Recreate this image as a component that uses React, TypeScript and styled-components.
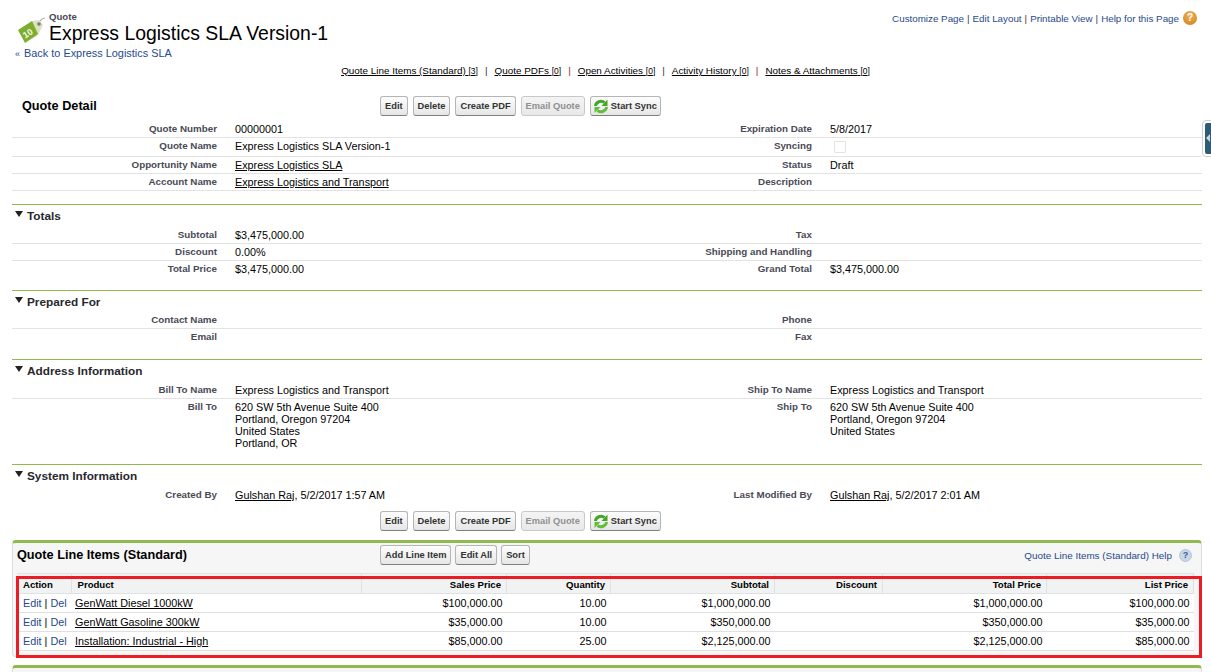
import React from "react";
import styled, { createGlobalStyle } from "styled-components";

const GlobalStyle = createGlobalStyle`
  html, body {
    margin: 0;
    padding: 0;
    height: 672px;
    overflow: hidden;
    background: #fff;
  }
  body {
    font-family: "Liberation Sans", Arial, sans-serif;
    font-size: 11px;
    color: #000;
  }
`;

type Field = { label: string; value?: React.ReactNode; lines?: string[]; link?: boolean };
type Row = [Field, Field];

const detailRows: Row[] = [
  [{ label: "Quote Number", value: "00000001" }, { label: "Expiration Date", value: "5/8/2017" }],
  [{ label: "Quote Name", value: "Express Logistics SLA Version-1" }, { label: "Syncing", value: <Check /> }],
  [{ label: "Opportunity Name", value: "Express Logistics SLA", link: true }, { label: "Status", value: "Draft" }],
  [{ label: "Account Name", value: "Express Logistics and Transport", link: true }, { label: "Description" }],
];

const totalRows: Row[] = [
  [{ label: "Subtotal", value: "$3,475,000.00" }, { label: "Tax" }],
  [{ label: "Discount", value: "0.00%" }, { label: "Shipping and Handling" }],
  [{ label: "Total Price", value: "$3,475,000.00" }, { label: "Grand Total", value: "$3,475,000.00" }],
];

const preparedRows: Row[] = [
  [{ label: "Contact Name" }, { label: "Phone" }],
  [{ label: "Email" }, { label: "Fax" }],
];

const addressRows: Row[] = [
  [
    { label: "Bill To Name", value: "Express Logistics and Transport" },
    { label: "Ship To Name", value: "Express Logistics and Transport" },
  ],
  [
    {
      label: "Bill To",
      lines: ["620 SW 5th Avenue Suite 400", "Portland, Oregon 97204", "United States", "Portland, OR"],
    },
    {
      label: "Ship To",
      lines: ["620 SW 5th Avenue Suite 400", "Portland, Oregon 97204", "United States"],
    },
  ],
];

const columns = [
  { title: "Sales Price", width: 145 },
  { title: "Quantity", width: 104 },
  { title: "Subtotal", width: 164 },
  { title: "Discount", width: 108 },
  { title: "Total Price", width: 164 },
  { title: "List Price", width: 147 },
];

const lineItems = [
  { name: "GenWatt Diesel 1000kW", cells: ["$100,000.00", "10.00", "$1,000,000.00", "", "$1,000,000.00", "$100,000.00"] },
  { name: "GenWatt Gasoline 300kW", cells: ["$35,000.00", "10.00", "$350,000.00", "", "$350,000.00", "$35,000.00"] },
  { name: "Installation: Industrial - High", cells: ["$85,000.00", "25.00", "$2,125,000.00", "", "$2,125,000.00", "$85,000.00"] },
];

const relatedLinks = [
  { label: "Quote Line Items (Standard)", count: 3 },
  { label: "Quote PDFs", count: 0 },
  { label: "Open Activities", count: 0 },
  { label: "Activity History", count: 0 },
  { label: "Notes & Attachments", count: 0 },
];

function Check() {
  return <CheckBox />;
}

function TagIcon() {
  return (
    <svg width="32" height="30" viewBox="0 0 32 30">
      <path d="M24 8c1-3 4-5 6-5" fill="none" stroke="#a5a5a5" strokeWidth="1.2" />
      <path d="M17 6l7-1 4 5-3 6-3 5-12 7z" fill="#dbe2bd" />
      <path d="M3 15 17 6l6 13-13 9z" fill="#7dae2f" />
      <circle cx="24" cy="9" r="1.8" fill="#7a7a7a" />
      <text
        x="8"
        y="22"
        fontSize="9"
        fontWeight="700"
        fill="#f4f7e6"
        fontFamily="Liberation Sans"
        transform="rotate(-34 12 19)"
      >
        10
      </text>
    </svg>
  );
}

function SyncIcon() {
  return (
    <svg width="16" height="16" viewBox="0 0 16 16">
      <path d="M2.500 8A5.500 5 0 0 1 11.500 4.500" fill="none" stroke="#45a526" strokeWidth="3" />
      <path d="M14.500 1.500V8H8.500z" fill="#45a526" />
      <path d="M13.500 9A5.500 5 0 0 1 4.500 12.500" fill="none" stroke="#62bd3f" strokeWidth="3" />
      <path d="M1.500 15V9H7.500z" fill="#62bd3f" />
    </svg>
  );
}

function ToolbarButtons() {
  return (
    <ButtonRow>
      <Button>Edit</Button>
      <Button>Delete</Button>
      <Button>Create PDF</Button>
      <Button disabled>Email Quote</Button>
      <SyncButton>
        <SyncIcon />
        Start Sync
      </SyncButton>
    </ButtonRow>
  );
}

function FieldCells({ field }: { field: Field }) {
  return (
    <>
      <Label>{field.label}</Label>
      <Value>
        {field.lines ? (
          field.lines.map((l) => <AddressLine key={l}>{l}</AddressLine>)
        ) : field.link ? (
          <UnderLink>{field.value}</UnderLink>
        ) : (
          field.value
        )}
      </Value>
    </>
  );
}

function Rows({ rows }: { rows: Row[] }) {
  return (
    <>
      {rows.map((r) => (
        <FieldRow key={r[0].label}>
          <FieldCells field={r[0]} />
          <FieldCells field={r[1]} />
        </FieldRow>
      ))}
    </>
  );
}

export default function App() {
  return (
    <Page>
      <GlobalStyle />
      <SideTab />
      <Header>
        <TitleBlock>
          <TagWrap>
            <TagIcon />
          </TagWrap>
          <div>
            <ObjectType>Quote</ObjectType>
            <PageTitle>Express Logistics SLA Version-1</PageTitle>
          </div>
        </TitleBlock>
        <TopLinks>
          <BlueLink>Customize Page</BlueLink>
          <Pipe>|</Pipe>
          <BlueLink>Edit Layout</BlueLink>
          <Pipe $red>|</Pipe>
          <BlueLink>Printable View</BlueLink>
          <Pipe>|</Pipe>
          <BlueLink>Help for this Page</BlueLink>
          <HelpDot>?</HelpDot>
        </TopLinks>
      </Header>
      <BackLine>
        <small>«</small> <BlueLink>Back to Express Logistics SLA</BlueLink>
      </BackLine>
      <RelatedBar>
        {relatedLinks.map((l, i) => (
          <React.Fragment key={l.label}>
            {i > 0 && <RelatedPipe $red={i === 2 || i === 4}>|</RelatedPipe>}
            <RelatedLink>
              {l.label} <sub>[{l.count}]</sub>
            </RelatedLink>
          </React.Fragment>
        ))}
      </RelatedBar>

      <Detail>
        <DetailHead>
          <DetailTitle>Quote Detail</DetailTitle>
          <ToolbarButtons />
        </DetailHead>
        <Rows rows={detailRows} />

        <Section $top={13}>
          <SectionTitle $height={22}>Totals</SectionTitle>
          <Rows rows={totalRows} />
        </Section>
        <Section $top={13}>
          <SectionTitle>Prepared For</SectionTitle>
          <Rows rows={preparedRows} />
        </Section>
        <Section $top={14}>
          <SectionTitle $height={22}>Address Information</SectionTitle>
          <Rows rows={addressRows} />
        </Section>
        <Section $top={14}>
          <SectionTitle $height={22}>System Information</SectionTitle>
          <FieldRow>
            <Label>Created By</Label>
            <Value>
              <UnderLink>Gulshan Raj</UnderLink>, 5/2/2017 1:57 AM
            </Value>
            <Label>Last Modified By</Label>
            <Value>
              <UnderLink>Gulshan Raj</UnderLink>, 5/2/2017 2:01 AM
            </Value>
          </FieldRow>
        </Section>
        <BottomButtons>
          <ToolbarButtons />
        </BottomButtons>
      </Detail>

      <Panel>
        <PanelHead>
          <PanelTitle>Quote Line Items (Standard)</PanelTitle>
          <PanelButtons>
            <Button>Add Line Item</Button>
            <Button>Edit All</Button>
            <Button>Sort</Button>
          </PanelButtons>
          <PanelHelp>
            <BlueLink>Quote Line Items (Standard) Help</BlueLink>
            <HelpBlue>?</HelpBlue>
          </PanelHelp>
        </PanelHead>
        <Table>
          <thead>
            <tr>
              <Th style={{ width: 54 }}>Action</Th>
              <Th>Product</Th>
              {columns.map((c) => (
                <Th key={c.title} $right style={{ width: c.width }}>
                  {c.title}
                </Th>
              ))}
            </tr>
          </thead>
          <tbody>
            {lineItems.map((item) => (
              <tr key={item.name}>
                <Td>
                  <BlueLink>Edit</BlueLink> | <BlueLink>Del</BlueLink>
                </Td>
                <Td>
                  <UnderLink>{item.name}</UnderLink>
                </Td>
                {item.cells.map((c, i) => (
                  <Td key={i} $right>
                    {c}
                  </Td>
                ))}
              </tr>
            ))}
          </tbody>
        </Table>
        <Highlight />
      </Panel>
      <NextPanel />
    </Page>
  );
}

const Page = styled.div`
  position: relative;
  width: 1211px;
  height: 672px;
  overflow: hidden;
`;

const SideTab = styled.div`
  position: absolute;
  top: 120px;
  left: 1202px;
  width: 14px;
  height: 37px;
  box-sizing: border-box;
  border: 1px solid #cfcfcf;
  border-radius: 4px 0 0 4px;
  background: #fff;
  &::before {
    content: "";
    position: absolute;
    left: 2px;
    right: 0;
    top: 2px;
    bottom: 2px;
    border-radius: 2px 0 0 2px;
    background: #2c5c76;
  }
  &::after {
    content: "";
    position: absolute;
    left: 3px;
    top: 13px;
    border: 4px solid transparent;
    border-right-color: #c9d6dc;
    border-left: 0;
  }
`;

const Header = styled.div`
  display: flex;
  justify-content: space-between;
  box-sizing: border-box;
  height: 47px;
  padding: 12px 14px 0 17px;
`;

const TitleBlock = styled.div`
  display: flex;
`;

const TagWrap = styled.div`
  width: 32px;
  margin-left: -2px;
  margin-right: 2px;
  padding-top: 3px;
`;

const ObjectType = styled.div`
  font-size: 9.6px;
  font-weight: 700;
  color: #4a4a56;
  line-height: 10px;
`;

const PageTitle = styled.h1`
  margin: 0;
  font-size: 19.4px;
  font-weight: 400;
  line-height: 22px;
  white-space: nowrap;
`;

const TopLinks = styled.div`
  display: flex;
  align-items: flex-start;
  font-size: 9.8px;
  line-height: 14px;
`;

const BlueLink = styled.span`
  color: #1f4a8c;
`;

const Pipe = styled.span<{ $red?: boolean }>`
  margin: 0 3px;
  color: ${(p) => (p.$red ? "#7a1f1f" : "#1f3a5c")};
`;

const HelpDot = styled.span`
  width: 14px;
  height: 14px;
  margin: -1px 0 0 4px;
  border-radius: 50%;
  background: radial-gradient(circle at 50% 30%, #f2b158, #d07f18);
  color: #fff;
  font-size: 10px;
  font-weight: 700;
  line-height: 14px;
  text-align: center;
`;

const BackLine = styled.div`
  padding-left: 15px;
  height: 14px;
  font-size: 10.9px;
  line-height: 13px;
  color: #1f4a8c;
  small {
    font-size: 9px;
    margin-right: 1px;
  }
`;

const RelatedBar = styled.div`
  display: flex;
  justify-content: center;
  align-items: baseline;
  box-sizing: border-box;
  height: 20px;
  padding-top: 3px;
  font-size: 9.9px;
  line-height: 14px;
`;

const RelatedLink = styled.span`
  text-decoration: underline;
  sub {
    font-size: 8.5px;
    vertical-align: baseline;
  }
`;

const RelatedPipe = styled.span<{ $red?: boolean }>`
  margin: 0 7px;
  color: ${(p) => (p.$red ? "#8a2a2a" : "#333")};
`;

const Detail = styled.div`
  margin: 0 9px 0 12px;
`;

const DetailHead = styled.div`
  display: flex;
  align-items: center;
  height: 28px;
  padding-left: 10px;
  margin-top: 11px;
  margin-bottom: 1px;
`;

const DetailTitle = styled.h2`
  width: 358px;
  margin: 0;
  font-size: 12.7px;
  font-weight: 700;
`;

const ButtonRow = styled.div`
  display: flex;
  gap: 5px;
`;

const Button = styled.button`
  display: inline-flex;
  align-items: center;
  height: 20px;
  padding: 0 4px;
  border: 1px solid #b5b5b5;
  border-bottom-color: #7f7f7f;
  border-radius: 3px;
  background: linear-gradient(#fdfdfd, #e6e6e6);
  font-family: "Liberation Sans", Arial, sans-serif;
  font-size: 9.3px;
  font-weight: 700;
  color: #333;
  &:disabled {
    color: #909090;
    border-color: #c8c8c8;
    background: linear-gradient(#f4f4f4, #e8e8e8);
  }
`;

const SyncButton = styled(Button)`
  gap: 2px;
  padding: 0 3px 0 2px;
`;

const FieldRow = styled.div`
  display: grid;
  grid-template-columns: 205px 372px 223px 1fr;
  padding: 2px 0 1px;
  line-height: 13px;
  border-bottom: 1px solid #e3e3e3;
  &:last-child {
    border-bottom: 0;
  }
`;

const Label = styled.div`
  min-height: 13px;
  line-height: 11px;
  text-align: right;
  font-size: 9.8px;
  font-weight: 700;
  color: #4a4a56;
`;

const Value = styled.div`
  padding-left: 18px;
  font-size: 10.8px;
  color: #000;
`;

const AddressLine = styled.div`
  line-height: 12px;
`;

const UnderLink = styled.span`
  color: #000;
  text-decoration: underline;
`;

const CheckBox = styled.span`
  display: block;
  width: 10px;
  height: 10px;
  margin: 1px 0 2px 4px;
  border: 1px solid #e4e4e4;
  border-radius: 1px;
`;

const Section = styled.section<{ $top: number }>`
  margin-top: ${(p) => p.$top}px;
  border-top: 1px solid #8fbb4c;
`;

const SectionTitle = styled.h3<{ $height?: number }>`
  position: relative;
  margin: 0;
  height: ${(p) => p.$height ?? 21}px;
  padding: 4px 0 0 15px;
  box-sizing: border-box;
  font-size: 11.8px;
  line-height: 14px;
  font-weight: 700;
  color: #27282e;
  &::before {
    content: "";
    position: absolute;
    left: 3px;
    top: 6px;
    border-style: solid;
    border-width: 6px 4px 0;
    border-color: #222 transparent transparent;
  }
`;

const BottomButtons = styled.div`
  display: flex;
  padding: 8px 0 0 368px;
`;

const Panel = styled.div`
  position: relative;
  box-sizing: border-box;
  height: 117px;
  margin: 9px 9px 0 12px;
  padding: 0 6px 0 4px;
  border: 1px solid #dcdcdc;
  border-top: 3px solid #8fbb4c;
  border-radius: 4px;
  background: #f6f6f6;
`;

const PanelHead = styled.div`
  display: flex;
  align-items: center;
  height: 28px;
  margin-bottom: 2px;
`;

const PanelTitle = styled.h2`
  width: 363px;
  margin: 0 0 5px;
  font-size: 12.7px;
  font-weight: 700;
`;

const PanelButtons = styled.div`
  display: flex;
  gap: 4px;
  margin-bottom: 4px;
`;

const PanelHelp = styled.div`
  display: flex;
  align-items: center;
  gap: 7px;
  margin: 0 3px 4px auto;
  font-size: 9.9px;
`;

const HelpBlue = styled.span`
  box-sizing: border-box;
  width: 13px;
  height: 13px;
  border-radius: 50%;
  background: #c9d6e6;
  border: 1px solid #b4c4d8;
  color: #2f5d9f;
  font-size: 9px;
  font-weight: 700;
  line-height: 11px;
  text-align: center;
`;

const Table = styled.table`
  width: 1177px;
  border-collapse: collapse;
  table-layout: fixed;
  background: #fff;
`;

const Th = styled.th<{ $right?: boolean }>`
  height: 20px;
  padding: 2px 5px 0 6px;
  box-sizing: border-box;
  background: #f1f2f2;
  border: 1px solid #dfe2e4;
  border-width: 1px 1px 1px 0;
  text-align: ${(p) => (p.$right ? "right" : "left")};
  font-size: 9.6px;
  font-weight: 700;
  color: #000;
`;

const Td = styled.td<{ $right?: boolean }>`
  height: 19px;
  padding: 0 4px;
  box-sizing: border-box;
  border-bottom: 1px solid #e0e0e0;
  text-align: ${(p) => (p.$right ? "right" : "left")};
  font-size: 10.8px;
  white-space: nowrap;
  &:first-child {
    padding-left: 6px;
  }
`;

const Highlight = styled.div`
  position: absolute;
  left: 3px;
  right: -1px;
  top: 33px;
  height: 82px;
  box-sizing: border-box;
  border: 3px solid #ed1c24;
  pointer-events: none;
`;

const NextPanel = styled.div`
  margin: 8px 9px 0 12px;
  height: 20px;
  border: 1px solid #dcdcdc;
  border-top: 3px solid #8fbb4c;
  border-radius: 4px 4px 0 0;
  background: #f6f6f6;
`;
